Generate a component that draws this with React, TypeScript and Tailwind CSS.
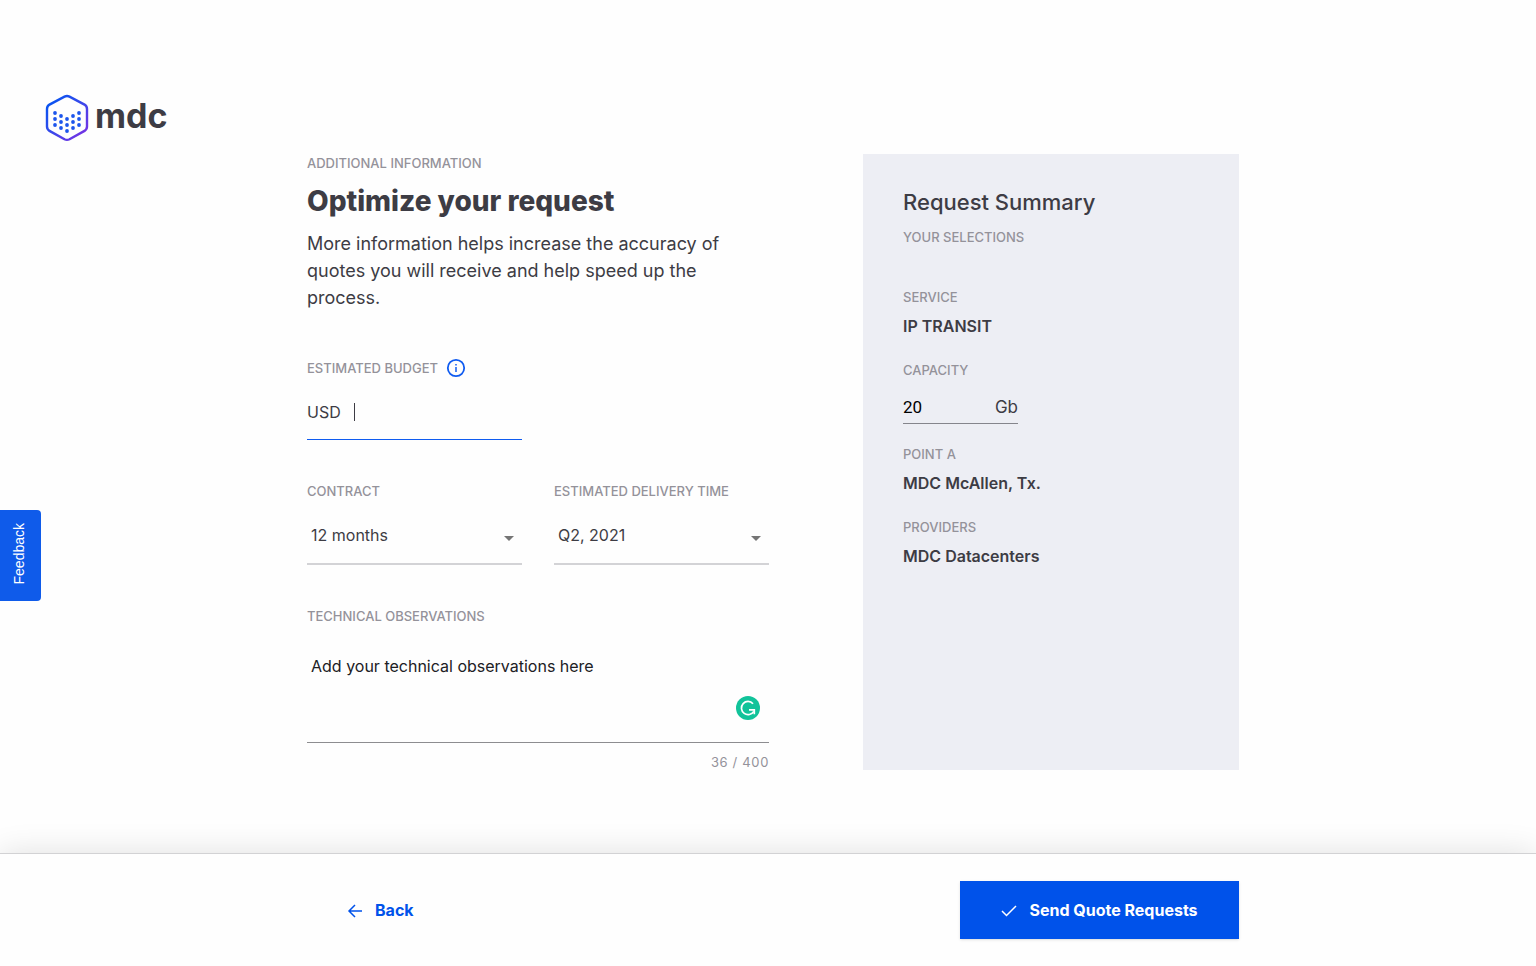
import { useState } from 'react';
import type { ReactNode } from 'react';

const labelClass = 'text-[13px] leading-4 font-medium uppercase text-[#94929a]';

function Logo() {
  // columns of dots: x position and the y of the first dot
  const columns = [
    { x: 10, y: 19, count: 3 },
    { x: 16, y: 22, count: 3 },
    { x: 22, y: 25, count: 3 },
    { x: 28, y: 22, count: 3 },
    { x: 34, y: 19, count: 3 },
  ];

  return (
    <a href="#" className="flex items-start gap-1.5 w-fit" aria-label="mdc home">
      <svg width="44" height="48" viewBox="0 0 44 48" fill="none">
        <defs>
          <linearGradient id="logo-stroke" x1="6" y1="8" x2="38" y2="40" gradientUnits="userSpaceOnUse">
            <stop stopColor="#0a53f0" />
            <stop offset="0.5" stopColor="#3a48ea" />
            <stop offset="1" stopColor="#7034e4" />
          </linearGradient>
        </defs>
        <path
          d="M19.5 2.6 Q22 1.4 24.5 2.6 L39.5 10.6 Q42 12.2 42 15 V32.5 Q42 35.3 39.5 36.9 L24.5 45.2 Q22 46.5 19.5 45.2 L4.5 36.9 Q2 35.3 2 32.5 V15 Q2 12.2 4.5 10.6 Z"
          stroke="url(#logo-stroke)"
          strokeWidth="2.4"
        />
        {columns.map((col) =>
          Array.from({ length: col.count }, (_, i) => (
            <circle key={`${col.x}-${i}`} cx={col.x} cy={col.y + i * 6} r="1.9" fill="#1c55ec" />
          ))
        )}
      </svg>
      <span className="text-[34px] leading-[44px] font-bold text-[#3d3c44]">mdc</span>
    </a>
  );
}

function SelectField({ id, label, options }: { id: string; label: string; options: string[] }) {
  return (
    <div className="flex-1 flex flex-col">
      <label htmlFor={id} className={labelClass}>
        {label}
      </label>
      <div className="relative mt-5">
        <select
          id={id}
          className="block w-full h-[46px] pl-1 pr-8 pb-3 appearance-none bg-transparent border-b-2 border-[#d3d3d6] text-base text-[#3d3c44] outline-none"
        >
          {options.map((option) => (
            <option key={option}>{option}</option>
          ))}
        </select>
        <svg className="absolute right-2 top-[17px] pointer-events-none" width="10" height="5" viewBox="0 0 10 5">
          <path d="M0 0h10L5 5z" fill="#757575" />
        </svg>
      </div>
    </div>
  );
}

function SummaryItem({ label, children }: { label: string; children: ReactNode }) {
  return (
    <div>
      <dt className={labelClass}>{label}</dt>
      <dd className="mt-[9px] text-base leading-6 font-semibold text-[#3d3c44]">{children}</dd>
    </div>
  );
}

export default function App() {
  const [budget, setBudget] = useState('');
  const [capacity, setCapacity] = useState('20');

  return (
    <div className="min-h-screen flex flex-col bg-[#fefefe] font-['Inter',sans-serif] text-[#3d3c44]">
      <header className="pt-[94px] px-[45px]">
        <Logo />
      </header>

      <main className="flex-1 w-full max-w-[1002px] mx-auto pt-3 pl-10 pr-[30px] pb-[83px] flex justify-between gap-[94px]">
        {/* Form */}
        <form className="flex-1 flex flex-col pt-px">
          <p className={labelClass}>Additional information</p>
          <h1 className="mt-2.5 text-[28px] leading-10 font-extrabold">Optimize your request</h1>
          <p className="mt-[9px] text-lg leading-[27px]">
            More information helps increase the accuracy of quotes you will receive and help speed up the process.
          </p>

          <div className="mt-[47px] flex items-center gap-2">
            <label htmlFor="budget" className={labelClass}>
              Estimated budget
            </label>
            <button type="button" aria-label="About the estimated budget">
              <svg width="20" height="20" viewBox="0 0 20 20" fill="none" stroke="#0f5bf0">
                <circle cx="10" cy="10" r="8.2" strokeWidth="1.8" />
                <path d="M10 9v5" strokeWidth="1.5" />
                <path d="M10 6v1.6" strokeWidth="1.5" />
              </svg>
            </button>
          </div>
          <div className="mt-4 w-[215px] h-[46px] pb-2.5 flex items-center border-b border-[#0f5bf0]">
            <span className="text-base">USD</span>
            <span className="ml-[13px] w-px h-[18px] bg-[#3d3c44]" />
            <input
              id="budget"
              value={budget}
              onChange={(e) => setBudget(e.target.value)}
              className="flex-1 min-w-0 bg-transparent outline-none"
            />
          </div>

          <div className="mt-[43px] flex gap-8">
            <SelectField id="contract" label="Contract" options={['12 months', '24 months', '36 months']} />
            <SelectField
              id="delivery"
              label="Estimated delivery time"
              options={['Q2, 2021', 'Q3, 2021', 'Q4, 2021']}
            />
          </div>

          <label htmlFor="observations" className={`mt-[43px] ${labelClass}`}>
            Technical observations
          </label>
          <div className="relative mt-5">
            <textarea
              id="observations"
              className="block w-full h-[99px] px-1 pt-[10px] resize-none bg-transparent border-b border-[#8d8d90] text-base leading-6 text-[#202024] outline-none"
              defaultValue="Add your technical observations here"
            />
            <svg className="absolute right-[9px] bottom-[23px]" width="24" height="24" viewBox="0 0 24 24" fill="none">
              <circle cx="12" cy="12" r="12" fill="#11c39a" />
              <path d="M17 7.7A6.6 6.6 0 1 0 17.8 15.3" stroke="#fff" strokeWidth="1.7" />
              <path d="M13 13.8h5.3v4.4" stroke="#fff" strokeWidth="1.7" />
            </svg>
          </div>
          <p className="mt-[11px] text-right text-[13px] leading-4 tracking-wider text-[#94929a]">36 / 400</p>
        </form>

        {/* Summary */}
        <aside className="w-[376px] min-h-[616px] px-10 pt-8 bg-[#edeef4]">
          <h2 className="text-[22px] leading-8 font-medium">Request Summary</h2>
          <p className={`mt-[11px] ${labelClass}`}>Your selections</p>

          <dl className="mt-11 flex flex-col gap-6">
            <SummaryItem label="Service">IP TRANSIT</SummaryItem>
            <SummaryItem label="Capacity">
              <div className="w-[115px] h-[37px] -mb-0.5 pt-1 flex items-center border-b border-[#85858c] text-[17px] font-normal">
                <input
                  aria-label="Capacity"
                  value={capacity}
                  onChange={(e) => setCapacity(e.target.value)}
                  className="flex-1 min-w-0 bg-transparent text-black font-['Roboto',sans-serif] outline-none"
                />
                <span>Gb</span>
              </div>
            </SummaryItem>
            <SummaryItem label="Point A">MDC McAllen, Tx.</SummaryItem>
            <SummaryItem label="Providers">MDC Datacenters</SummaryItem>
          </dl>
        </aside>
      </main>

      <footer className="border-t border-[#d2d2d4] bg-[#fefefe] shadow-[0_0_30px_rgba(0,0,0,0.12)]">
        <div className="w-full max-w-[1002px] mx-auto pt-[27px] pb-[27px] pl-10 pr-[30px] flex items-center justify-between">
          <button type="button" className="ml-10 flex items-center gap-3 text-base font-bold text-[#0052ea]">
            <svg width="16" height="16" viewBox="0 0 16 16" fill="none" stroke="currentColor" strokeWidth="1.5">
              <path d="M15 9H2.5M8 3L2 9l6 6" />
            </svg>
            Back
          </button>
          <button
            type="submit"
            className="w-[279px] h-[58px] flex items-center justify-center gap-3 bg-[#0052ea] text-base font-bold text-white shadow-sm"
          >
            <svg width="16" height="16" viewBox="0 0 16 16" fill="none" stroke="currentColor" strokeWidth="1.5">
              <path d="M1 9l4.5 4.5L15 4" />
            </svg>
            Send Quote Requests
          </button>
        </div>
      </footer>

      {/* Feedback tab */}
      <button
        type="button"
        className="fixed left-0 top-[510px] w-[41px] h-[91px] pr-1 pb-1 flex items-center justify-center rounded-r bg-[#0f5bea] text-white"
      >
        <span className="rotate-180 [writing-mode:vertical-rl] font-['Liberation_Sans',sans-serif] text-sm">
          Feedback
        </span>
      </button>
    </div>
  );
}
